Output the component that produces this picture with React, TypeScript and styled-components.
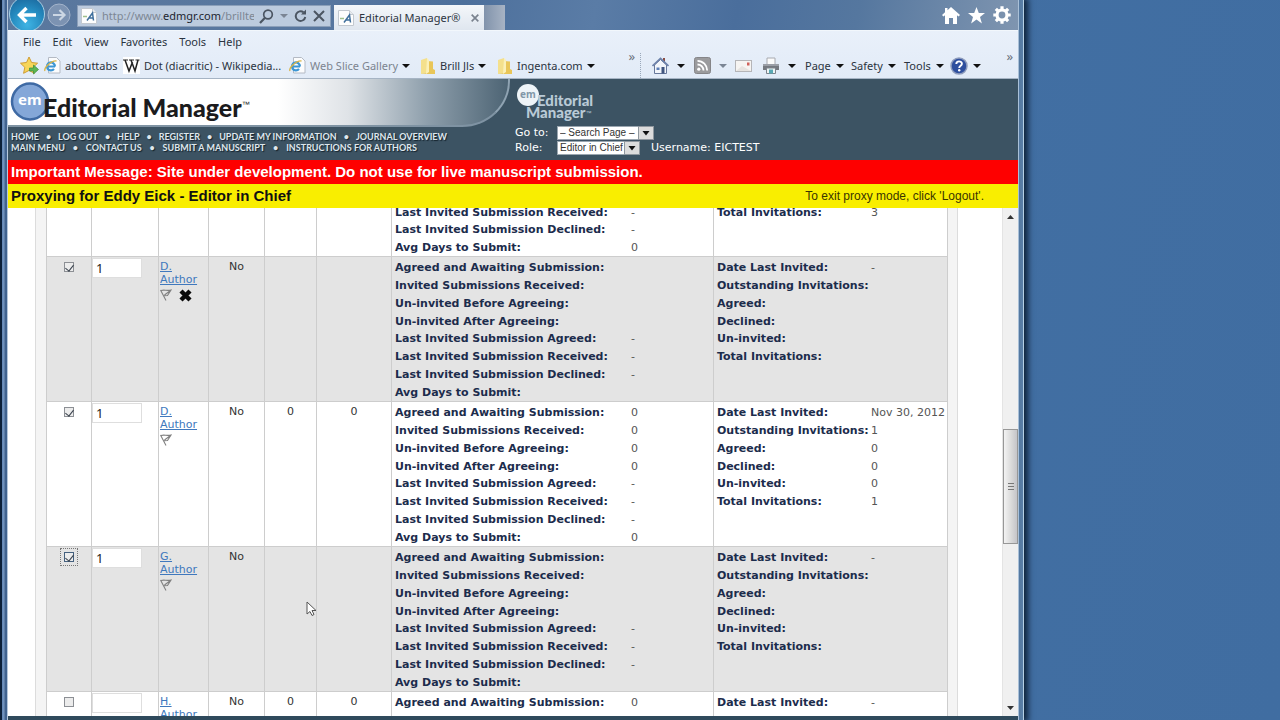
import React, { useLayoutEffect, useRef } from "react";
import styled, { createGlobalStyle, css } from "styled-components";

const ui = `"Noto Sans", "Open Sans", sans-serif`;
const verdana = `"DejaVu Sans", sans-serif`;
const arial = `"Liberation Sans", sans-serif`;
const brandFont = `Lato, sans-serif`;

const GlobalStyle = createGlobalStyle`
  * { box-sizing: border-box; }
  body { margin: 0; background: #426fa3; font-family: ${verdana}; }
  button { border: 0; padding: 0; background: none; color: inherit; font: inherit; }
  a { color: inherit; text-decoration: none; }
  svg { display: block; flex: none; }
`;

/* ---------- window frame ---------- */

const Desktop = styled.div`
  height: 100vh;
  overflow: hidden;
  background: linear-gradient(100deg, #4573a6, #406da1);
`;

const Window = styled.div`
  width: 80%;
  height: 100%;
  padding: 0 6px 4px 8px;
  display: flex;
  flex-direction: column;
  background:
    linear-gradient(90deg, #0c2038 2px, #5f84b4 2px, #7898c0 4px, #41638f 5px, #41638f 7px, #b6c8dc 7px) left / 8px 100% no-repeat,
    linear-gradient(90deg, #a9c0d8 1px, #54789f 1px, #5b80a8 5px, #b6d0e4 5px) right / 6px 100% no-repeat,
    #2f4a5c;
  box-shadow: 2px 0 6px 2px #10243c;
`;

const TitleBar = styled.div`
  height: 30px;
  flex: none;
  display: flex;
  align-items: flex-end;
  background: linear-gradient(100deg, #5a789e 0%, #58779f 30%, #4d709c 45%, #5a7ca6 58%, #4a6e9c 72%, #55779f 84%, #7f95b0 100%);
`;

const HistoryButtons = styled.div`
  height: 30px;
  width: 69px;
  display: flex;
  align-items: center;
`;

const AddressBar = styled.div`
  width: 254px;
  height: 22px;
  margin-bottom: 3px;
  padding: 0 5px 0 3px;
  display: flex;
  align-items: center;
  gap: 5px;
  background: #bccbde;
  border: 1px solid #8b9fb9;
`;

const Url = styled.div`
  flex: 1;
  min-width: 0;
  overflow: hidden;
  white-space: nowrap;
  font: 11px/18px ${ui};
  color: #7d8794;
  b { font-weight: 400; color: #1d2530; }
`;

const AddressTools = styled.div`
  display: flex;
  align-items: center;
  gap: 6px;
`;

const Tab = styled.div`
  width: 150px;
  height: 25px;
  margin-left: 3px;
  padding: 0 5px 0 4px;
  display: flex;
  align-items: center;
  gap: 5px;
  background: linear-gradient(#f4f7fa, #dfe6ef);
  font: 11px/18px ${ui};
  color: #2c3440;
  span { flex: 1; white-space: nowrap; }
`;

const NewTab = styled.button`
  width: 21px;
  height: 25px;
  background: linear-gradient(90deg, #8193ab, #a7b3c4);
`;

const TitleIcons = styled.div`
  margin-left: auto;
  height: 30px;
  padding-right: 7px;
  display: flex;
  align-items: center;
  gap: 8px;
`;

const Bars = styled.div`
  height: 49px;
  flex: none;
  border-top: 1px solid #f2f7fc;
  border-bottom: 1px solid #a6b4c4;
  background: linear-gradient(#e9f0fa, #e2ebf7);
  font: 11px/18px ${ui};
  color: #2a3340;
`;

const MenuBar = styled.nav`
  height: 22px;
  padding-left: 15px;
  display: flex;
  align-items: center;
  gap: 12px;
`;

const ToolsRow = styled.div`
  height: 25px;
  display: flex;
`;

const Favorites = styled.div`
  flex: 1;
  padding-left: 12px;
  display: flex;
  align-items: center;
  white-space: nowrap;
`;

const Favorite = styled.button<{ $muted?: boolean; $w: number }>`
  width: ${(p) => p.$w}px;
  flex: none;
  display: flex;
  align-items: center;
  gap: 4px;
  color: ${(p) => (p.$muted ? "#7c848f" : "inherit")};
`;

const Chevron = styled.span`
  align-self: flex-start;
  margin-left: auto;
  padding-right: 5px;
  font: 13px/6px ${ui};
  color: #69717c;
`;

const Commands = styled.div`
  width: 378px;
  padding-left: 11px;
  display: flex;
  align-items: center;
  border-left: 1px dotted #9aa8ba;
`;

const Command = styled(Favorite)`
  gap: 5px;
`;

const Caret = styled.i<{ $muted?: boolean; $push?: boolean }>`
  flex: none;
  margin-left: ${(p) => (p.$push ? "3px" : "0")};
  border: 4px solid transparent;
  border-top-color: ${(p) => (p.$muted ? "#7b8594" : "#111")};
  border-bottom: 0;
`;

/* ---------- site header ---------- */

const SiteHeader = styled.header`
  height: 81px;
  flex: none;
  display: flex;
  background: #3c5363;
`;

const Brand = styled.div`
  width: 504px;
`;

const BrandPlate = styled.div`
  width: 502px;
  height: 48px;
  padding-left: 1px;
  display: flex;
  border-right: 2px solid #8fa3b2;
  border-bottom: 2px solid #7f93a3;
  border-bottom-right-radius: 48px 46px;
  background: linear-gradient(90deg, #fff 54%, #dfe3e7 68%, #8d9eab 84%, #4d6474 100%);
`;

const BrandName = styled.div`
  margin-left: -6px;
  font: 900 25px/56px ${brandFont};
  color: #1b1b1d;
  white-space: nowrap;
  sup { font: 8px/8px ${arial}; vertical-align: 10px; }
`;

const SiteNav = styled.nav<{ $w: number }>`
  width: ${(p) => p.$w}px;
  margin-left: 3px;
  display: flex;
  justify-content: space-between;
  font: 700 9px/11px ${brandFont};
  color: #dfe7ed;
  text-shadow: 1px 1px 1px #14222c;
  white-space: nowrap;
  &:first-of-type { margin-top: 4px; }
`;

const HeaderSide = styled.div`
  padding: 5px 0 0 3px;
`;

const SmallLogo = styled.div`
  display: flex;
  height: 41px;
  margin-left: 1px;
  font: 900 15px/12px ${brandFont};
  color: #b9cad6;
  div { padding-top: 10px; margin-left: -14px; }
  span { display: block; }
  span:first-child { padding-left: 11px; }
  sup { font: 6px/6px ${arial}; vertical-align: 3px; }
`;

const Field = styled.div`
  height: 15px;
  display: flex;
  align-items: center;
  font: 11px/15px ${verdana};
  color: #fff;
  label { width: 42px; }
  strong { margin-left: 11px; font-weight: 400; }
`;

const SelectBox = styled.span<{ $w: number }>`
  width: ${(p) => p.$w}px;
  height: 14px;
  position: relative;
  select {
    display: block;
    width: 100%;
    height: 14px;
    padding: 0 2px;
    appearance: none;
    border: 1px solid #9aa6b0;
    border-radius: 0;
    background: #fff;
    font: 10px/12px ${arial};
    color: #333;
  }
  svg {
    position: absolute;
    right: 0;
    top: 0;
    pointer-events: none;
  }
`;

const Warning = styled.div`
  height: 24px;
  flex: none;
  padding-left: 3px;
  background: #fe0000;
  font: 700 15px/24px ${arial};
  color: #fff;
`;

const Proxy = styled.div`
  height: 24px;
  flex: none;
  padding: 0 34px 0 3px;
  display: flex;
  justify-content: space-between;
  background: #f9ee00;
  font: 700 15px/23px ${arial};
  color: #111;
  span { font: 12px/24px ${arial}; color: #3a3500; }
`;

/* ---------- scrolling page ---------- */

const Viewport = styled.div`
  flex: 1;
  min-height: 0;
  display: flex;
  position: relative;
  background: #fff;
`;

const Scroller = styled.main`
  flex: 1;
  min-width: 0;
  overflow: hidden;
  padding: 0 44px 0 27px;
`;

const Panel = styled.div`
  padding: 0 9px 0 10px;
  border: solid #dcdcdc;
  border-width: 0 1px;
  background: #f4f4f4;
`;

const Grid = styled.table`
  width: 100%;
  table-layout: fixed;
  border-collapse: collapse;
  font: 11px/13px ${verdana};
  color: #333;
`;

const Row = styled.tr<{ $shaded?: boolean }>`
  background: ${(p) => (p.$shaded ? "#e4e4e4" : "#fff")};
`;

const Cell = styled.td<{ $center?: boolean }>`
  padding: 3px 1px 0;
  vertical-align: top;
  border: 1px solid #cdcdcd;
  text-align: ${(p) => (p.$center ? "center" : "left")};
`;

const InputCell = styled(Cell)`
  padding: 1px 0 0;
`;

const StatCell = styled(Cell)`
  padding: 0 0 0 3px;
`;

const Stats = styled.dl<{ $col: number; $rows: number }>`
  margin: 0;
  padding-top: 2px;
  height: ${(p) => p.$rows * 18}px;
  display: grid;
  grid-template-columns: ${(p) => p.$col}px 1fr;
  grid-template-rows: repeat(${(p) => p.$rows}, 1fr);
  align-items: center;
  white-space: nowrap;
  dt { font-weight: 700; color: #1c2c4c; }
  dd { margin: 0; color: #555; }
`;

const Check = styled.input<{ $focused?: boolean }>`
  appearance: none;
  width: 10px;
  height: 10px;
  margin: 2px 1px 0 0;
  border: 1px solid #8c8f94;
  background: #ececec;
  vertical-align: top;
  ${(p) =>
    p.$focused &&
    css`
      outline: 1px dotted #777;
      outline-offset: 3px;
      border-color: #45617f;
    `}
  &:checked::after {
    content: "";
    display: block;
    width: 4px;
    height: 7px;
    margin-left: 2px;
    border: solid #38404c;
    border-width: 0 1px 1px 0;
    transform: rotate(38deg);
  }
`;

const Priority = styled.input`
  display: block;
  width: 50px;
  height: 20px;
  padding: 0 3px;
  border: 1px solid #dedede;
  background: #fff;
  font: 13px/18px ${ui};
  color: #222;
`;

const AuthorLink = styled.a`
  display: block;
  width: 40px;
  color: #4078bd;
  text-decoration: underline;
`;

const Marks = styled.div`
  display: flex;
  gap: 7px;
  margin-top: 3px;
`;

const ScrollBar = styled.div`
  width: 16px;
  display: flex;
  flex-direction: column;
  background: #f0f0f0;
  border-left: 1px solid #e4e4e4;
`;

const ArrowButton = styled.button`
  height: 17px;
  display: grid;
  place-items: center;
`;

const Track = styled.div<{ $grow: number }>`
  flex: ${(p) => p.$grow} 0 0;
`;

const Thumb = styled.div`
  flex: 113 0 0;
  display: grid;
  place-items: center;
  border: 1px solid #979797;
  background: linear-gradient(90deg, #f3f3f3, #dcdcdc 50%, #c4c4c8);
`;

const Pointer = styled.svg`
  position: absolute;
  left: 298px;
  top: 393px;
`;

/* ---------- drawings ---------- */

const BackIcon = () => (
  <svg width="38" height="30" viewBox="0 0 38 30">
    <defs>
      <radialGradient id="back" cx=".5" cy=".8" r=".8">
        <stop offset="0" stopColor="#3fb4e4" />
        <stop offset=".6" stopColor="#2488bd" />
        <stop offset="1" stopColor="#1c6a9f" />
      </radialGradient>
    </defs>
    <circle cx="19" cy="14" r="17.5" fill="url(#back)" stroke="#a8cfe4" />
    <path d="M28 15H12M18.500 8L11.500 15l7 7" fill="none" stroke="#fff" strokeWidth="3.400" />
  </svg>
);

const ForwardIcon = () => (
  <svg width="26" height="30" viewBox="0 0 26 30">
    <circle cx="13" cy="15" r="11" fill="#7c93b2" stroke="#a3b4cb" />
    <path d="M7 15h11M13.500 10l5 5-5 5" fill="none" stroke="#ccd7e4" strokeWidth="2.200" />
  </svg>
);

const PageIcon = () => (
  <svg width="16" height="16" viewBox="0 0 16 16">
    <path d="M.5.500h11l4 4v11H.5z" fill="#fdfdfd" stroke="#c2c8cf" />
    <path d="M11.500.500v4h4" fill="#e8ebef" stroke="#c2c8cf" />
    <path d="M2 8.500h4" stroke="#9fc08c" strokeWidth="1.500" />
    <path d="M6 12.500L11.500 5l1 7.500M8 10h4" fill="none" stroke="#3f6f9c" strokeWidth="1.500" />
  </svg>
);

const IeIcon = () => (
  <svg width="17" height="17" viewBox="0 0 17 17">
    <path d="M4.500.500h8l3.500 3.500v12h-11.500z" fill="#fbfcfd" stroke="#b4bac4" />
    <path d="M11 9.500H3.200M11 9.500a4 4 0 1 0-1 2.600" fill="none" stroke="#3c96d4" strokeWidth="2.200" />
    <path d="M1 14C-.5 11 7 3.500 12.500 4" fill="none" stroke="#d9b548" strokeWidth="1.300" />
  </svg>
);

const FolderIcon = () => (
  <svg width="16" height="18" viewBox="0 0 16 18">
    <path d="M1 3l6-2v15l-6 1z" fill="#f4e08c" />
    <path d="M7 4l6 .500V12l2 1v4H1l6-1z" fill="#e9c659" />
    <path d="M7 1l2 2v12l-3 2z" fill="#fbf0b8" />
  </svg>
);

const StarAddIcon = () => (
  <svg width="20" height="19" viewBox="0 0 20 19">
    <path d="M9 1l2.600 5.500 6 .700-4.400 4.100 1.200 6L9 14.400l-5.400 2.900 1.200-6L.5 7.200l6-.700z" fill="#f7d659" stroke="#cf9c34" />
    <path d="M9.500 12h4V9l5 4.500-5 4.500v-3h-4z" fill="#5db652" stroke="#3b8c3a" strokeWidth=".7" />
  </svg>
);

const WikiIcon = () => (
  <svg width="17" height="17" viewBox="0 0 17 17">
    <rect width="17" height="17" fill="#fff" />
    <path d="M0 3h5M6 3h5M12.500 3h4" stroke="#222" />
    <path d="M2 3l4 11L9.500 5M8 3l4 11 3-11" fill="none" stroke="#222" strokeWidth="1.500" />
  </svg>
);

const HouseIcon = () => (
  <svg width="17" height="18" viewBox="0 0 17 18">
    <path d="M11 1h2v4h-2z" fill="#8a4c44" />
    <path d="M2.500 8v8.500h12V8L8.500 2.500z" fill="#f2f5fa" stroke="#66779a" />
    <path d="M.5 9L8.500 1.500 16.500 9" fill="none" stroke="#6d82aa" strokeWidth="1.700" />
    <path d="M4.500 10.500h3V13h-3z" fill="#5d7fb8" />
    <path d="M9.500 10h3v6.500h-3z" fill="#40557f" />
  </svg>
);

const RssIcon = () => (
  <svg width="17" height="17" viewBox="0 0 17 17">
    <rect x=".5" y=".5" width="16" height="16" rx="2" fill="#9b9b9d" stroke="#858588" />
    <circle cx="4.800" cy="12.200" r="1.600" fill="#fff" />
    <path d="M3.500 7.500a6 6 0 0 1 6 6M3.500 3.800a9.700 9.700 0 0 1 9.700 9.700" fill="none" stroke="#fff" strokeWidth="1.800" />
  </svg>
);

const MailIcon = () => (
  <svg width="17" height="12" viewBox="0 0 17 12">
    <rect x=".5" y=".5" width="16" height="11" fill="#f6f4f2" stroke="#b5b5b8" />
    <path d="M1 11l6-5 9 5" fill="#e6e3e0" />
    <rect x="12" y="2.500" width="2.500" height="3" fill="#d0615a" />
  </svg>
);

const PrinterIcon = () => (
  <svg width="18" height="18" viewBox="0 0 18 18">
    <path d="M5 1h8v7H5z" fill="#fbfbfb" stroke="#a8aab0" />
    <path d="M1 7h16v6H1z" fill="#74787f" />
    <path d="M1 7h16v2H1z" fill="#9a9ea6" />
    <path d="M4.500 11h9v5.500h-9z" fill="#eef4f4" stroke="#7d838c" />
    <path d="M7 12.500h4v4H7z" fill="#58a8b4" />
  </svg>
);

const HelpIcon = () => (
  <svg width="18" height="18" viewBox="0 0 18 18">
    <circle cx="9" cy="9" r="8" fill="#2e4f9e" stroke="#8e9cbc" strokeWidth="1.500" />
    <path d="M6.300 7c0-3.600 5.600-3.400 5.600-.3 0 2-2.700 2-2.700 4.300" fill="none" stroke="#fff" strokeWidth="1.900" />
    <circle cx="9.200" cy="13.300" r="1.200" fill="#fff" />
  </svg>
);

const SearchIcon = () => (
  <svg width="15" height="15" viewBox="0 0 15 15">
    <circle cx="9" cy="5.500" r="4.300" fill="none" stroke="#4b5562" strokeWidth="1.700" />
    <path d="M6 8.800L1 14" stroke="#4b5562" strokeWidth="2.200" />
  </svg>
);

const ReloadIcon = () => (
  <svg width="13" height="14" viewBox="0 0 13 14">
    <path d="M9.500 3.300A4.800 4.800 0 1 0 11.300 8" fill="none" stroke="#4b5562" strokeWidth="1.900" />
    <path d="M7 5.500h5V.5z" fill="#4b5562" />
  </svg>
);

const CrossIcon = ({ size, color, weight }: { size: number; color: string; weight: number }) => (
  <svg width={size} height={size} viewBox="0 0 12 12">
    <path d="M1 1l10 10M11 1L1 11" stroke={color} strokeWidth={weight} />
  </svg>
);

const WhiteHome = () => (
  <svg width="18" height="17" viewBox="0 0 18 17">
    <path d="M9 0l9 8-1.500 1.500L15 8.300V17h-4v-6H7v6H3V8.300L1.500 9.500 0 8l3-2.700V1h2.500v2.200z" fill="#fff" />
  </svg>
);

const WhiteStar = () => (
  <svg width="17" height="17" viewBox="0 0 17 17">
    <path d="M8.500 0l2.300 6H17l-5 4 1.900 6.500-5.400-4-5.400 4L5 10 0 6h6.200z" fill="#fff" />
  </svg>
);

const WhiteGear = () => (
  <svg width="18" height="18" viewBox="0 0 18 18">
    <circle cx="9" cy="9" r="5" fill="none" stroke="#fff" strokeWidth="3.200" />
    {[0, 45, 90, 135].map((a) => (
      <path key={a} d="M9 .3v3M9 14.700v3" stroke="#fff" strokeWidth="3.200" transform={`rotate(${a} 9 9)`} />
    ))}
  </svg>
);

const EmBadge = () => (
  <svg width="40" height="42" viewBox="0 0 40 42">
    <circle cx="21" cy="22.500" r="18" fill="#84a7d8" stroke="#3f6aa4" strokeWidth="2.500" />
    <text x="9" y="26" fontFamily="Noto Sans, sans-serif" fontWeight="700" fontSize="15" fill="#fff">em</text>
  </svg>
);

const EmBadgeSmall = () => (
  <svg width="24" height="24" viewBox="0 0 24 24">
    <circle cx="12" cy="11" r="11" fill="#eef4f8" />
    <text x="4" y="14" fontFamily="Noto Sans, sans-serif" fontWeight="700" fontSize="10" fill="#8298a8">em</text>
  </svg>
);

const DropArrow = () => (
  <svg width="16" height="14" viewBox="0 0 16 14">
    <rect x=".5" y=".5" width="15" height="13" fill="#dcdcdc" stroke="#8f979e" />
    <path d="M4.500 5h7L8 9.500z" fill="#111" />
  </svg>
);

const FlagIcon = () => (
  <svg width="12" height="12" viewBox="0 0 12 12">
    <path d="M.5 1l5.500 10.500M1 1.500c3-1 6 .500 10-.500L7.500 6.500 4 6.800M10.500 1.500L4.500 6" fill="none" stroke="#808080" strokeWidth="1.100" />
  </svg>
);

const BlockIcon = () => (
  <svg width="13" height="13" viewBox="0 0 13 13">
    <path d="M2 2l9 9M11 2l-9 9" stroke="#0a0a0a" strokeWidth="4.400" />
  </svg>
);

const Triangle = ({ down }: { down?: boolean }) => (
  <svg width="7" height="4" viewBox="0 0 7 4">
    <path d={down ? "M0 0h7L3.500 4z" : "M0 4h7L3.500 0z"} fill="#333" />
  </svg>
);

/* ---------- data ---------- */

const statLabels = [
  "Agreed and Awaiting Submission:",
  "Invited Submissions Received:",
  "Un-invited Before Agreeing:",
  "Un-invited After Agreeing:",
  "Last Invited Submission Agreed:",
  "Last Invited Submission Received:",
  "Last Invited Submission Declined:",
  "Avg Days to Submit:",
];

const inviteLabels = [
  "Date Last Invited:",
  "Outstanding Invitations:",
  "Agreed:",
  "Declined:",
  "Un-invited:",
  "Total Invitations:",
];

type Author = {
  id: string;
  name?: string;
  checked?: boolean;
  focused?: boolean;
  blocked?: boolean;
  priority?: string;
  counts: [string, string];
  stats: string[];
  invites: string[];
  range: [number, number];
};

const none = ["", "", "", "", "-", "-", "-", ""];

const authors: Author[] = [
  { id: "a0", counts: ["", ""], stats: ["0", "0", "0", "0", "-", "-", "-", "0"], invites: ["", "", "", "", "", "3"], range: [5, 8] },
  { id: "a1", name: "D. Author", checked: true, blocked: true, priority: "1", counts: ["", ""], stats: none, invites: ["-"], range: [0, 8] },
  { id: "a2", name: "D. Author", checked: true, priority: "1", counts: ["0", "0"], stats: ["0", "0", "0", "0", "-", "-", "-", "0"], invites: ["Nov 30, 2012", "1", "0", "0", "0", "1"], range: [0, 8] },
  { id: "a3", name: "G. Author", checked: true, focused: true, priority: "1", counts: ["", ""], stats: none, invites: ["-"], range: [0, 8] },
  { id: "a4", name: "H. Author", priority: "", counts: ["0", "0"], stats: ["0", "0"], invites: ["-", ""], range: [0, 2] },
];

const StatList = ({ labels, values, range, col }: { labels: string[]; values: string[]; range: [number, number]; col: number }) => (
  <Stats $col={col} $rows={8 - range[0]}>
    {labels.slice(range[0], range[1]).map((label, i) => (
      <React.Fragment key={label}>
        <dt>{label}</dt>
        <dd>{values[range[0] + i]}</dd>
      </React.Fragment>
    ))}
  </Stats>
);

const AuthorRow = ({ author, shaded }: { author: Author; shaded: boolean }) => (
  <Row $shaded={shaded}>
    <Cell $center>
      {author.name && (
        <Check type="checkbox" aria-label={`Select ${author.name}`} defaultChecked={author.checked} $focused={author.focused} />
      )}
    </Cell>
    <InputCell>
      {author.name && <Priority type="text" aria-label={`Order for ${author.name}`} defaultValue={author.priority} />}
    </InputCell>
    <Cell>
      {author.name && (
        <>
          <AuthorLink href="#author">{author.name}</AuthorLink>
          <Marks>
            <FlagIcon />
            {author.blocked && <BlockIcon />}
          </Marks>
        </>
      )}
    </Cell>
    <Cell $center>{author.name && "No"}</Cell>
    <Cell $center>{author.counts[0]}</Cell>
    <Cell $center>{author.counts[1]}</Cell>
    <StatCell>
      <StatList labels={statLabels} values={author.stats} range={author.range} col={236} />
    </StatCell>
    <StatCell>
      <StatList labels={inviteLabels} values={author.invites} range={author.range} col={154} />
    </StatCell>
  </Row>
);

const navRows = [
  { w: 436, items: ["HOME", "LOG OUT", "HELP", "REGISTER", "UPDATE MY INFORMATION", "JOURNAL OVERVIEW"] },
  { w: 406, items: ["MAIN MENU", "CONTACT US", "SUBMIT A MANUSCRIPT", "INSTRUCTIONS FOR AUTHORS"] },
];

export default function App() {
  const scroller = useRef<HTMLElement>(null);

  useLayoutEffect(() => {
    if (scroller.current) scroller.current.scrollTop = 7;
  }, []);

  return (
    <Desktop>
      <GlobalStyle />
      <Window>
        <TitleBar>
          <HistoryButtons>
            <button aria-label="Back"><BackIcon /></button>
            <button aria-label="Forward"><ForwardIcon /></button>
          </HistoryButtons>
          <AddressBar>
            <PageIcon />
            <Url>http://www.<b>edmgr.com</b>/brillte</Url>
            <AddressTools>
              <SearchIcon />
              <Caret $muted />
              <ReloadIcon />
              <CrossIcon size={12} color="#4b5562" weight={2} />
            </AddressTools>
          </AddressBar>
          <Tab>
            <PageIcon />
            <span>Editorial Manager®</span>
            <CrossIcon size={8} color="#7a828e" weight={2.5} />
          </Tab>
          <NewTab aria-label="New tab" />
          <TitleIcons>
            <button aria-label="Home"><WhiteHome /></button>
            <button aria-label="Favorites"><WhiteStar /></button>
            <button aria-label="Settings"><WhiteGear /></button>
          </TitleIcons>
        </TitleBar>

        <Bars>
          <MenuBar>
            {["File", "Edit", "View", "Favorites", "Tools", "Help"].map((m) => (
              <button key={m}>{m}</button>
            ))}
          </MenuBar>
          <ToolsRow>
            <Favorites>
              <Favorite $w={24} aria-label="Add to favorites"><StarAddIcon /></Favorite>
              <Favorite $w={79}><IeIcon />abouttabs</Favorite>
              <Favorite $w={166}><WikiIcon />Dot (diacritic) - Wikipedia...</Favorite>
              <Favorite $w={131} $muted><IeIcon />Web Slice Gallery<Caret /></Favorite>
              <Favorite $w={77}><FolderIcon />Brill Jls<Caret /></Favorite>
              <Favorite $w={96}><FolderIcon />Ingenta.com<Caret /></Favorite>
              <Chevron>»</Chevron>
            </Favorites>
            <Commands>
              <Command $w={42} aria-label="Home page"><HouseIcon /><Caret $push /></Command>
              <Command $w={41} aria-label="Feeds"><RssIcon /><Caret $muted $push /></Command>
              <Command $w={27} aria-label="Read mail"><MailIcon /></Command>
              <Command $w={43} aria-label="Print"><PrinterIcon /><Caret $push /></Command>
              <Command $w={46}>Page<Caret /></Command>
              <Command $w={53}>Safety<Caret /></Command>
              <Command $w={46}>Tools<Caret /></Command>
              <Command $w={30} aria-label="Help"><HelpIcon /><Caret /></Command>
              <Chevron>»</Chevron>
            </Commands>
          </ToolsRow>
        </Bars>

        <SiteHeader>
          <Brand>
            <BrandPlate>
              <EmBadge />
              <BrandName>Editorial Manager<sup>™</sup></BrandName>
            </BrandPlate>
            {navRows.map((row) => (
              <SiteNav key={row.w} $w={row.w}>
                {row.items.map((item, i) => (
                  <React.Fragment key={item}>
                    {i > 0 && <span>•</span>}
                    <a href="#nav">{item}</a>
                  </React.Fragment>
                ))}
              </SiteNav>
            ))}
          </Brand>
          <HeaderSide>
            <SmallLogo>
              <EmBadgeSmall />
              <div>
                <span>Editorial</span>
                <span>Manager<sup>™</sup></span>
              </div>
            </SmallLogo>
            <Field>
              <label htmlFor="goto">Go to:</label>
              <SelectBox $w={97}>
                <select id="goto"><option>– Search Page –</option></select>
                <DropArrow />
              </SelectBox>
            </Field>
            <Field>
              <label htmlFor="role">Role:</label>
              <SelectBox $w={83}>
                <select id="role"><option>Editor in Chief</option></select>
                <DropArrow />
              </SelectBox>
              <strong>Username: EICTEST</strong>
            </Field>
          </HeaderSide>
        </SiteHeader>

        <Warning>Important Message: Site under development. Do not use for live manuscript submission.</Warning>
        <Proxy>
          Proxying for Eddy Eick - Editor in Chief
          <span>To exit proxy mode, click 'Logout'.</span>
        </Proxy>

        <Viewport>
          <Scroller ref={scroller}>
            <Panel>
              <Grid>
                <colgroup>
                  {[45, 67, 50, 56, 52, 75, 322].map((w) => <col key={w} width={w} />)}
                  <col />
                </colgroup>
                <tbody>
                  {authors.map((a, i) => <AuthorRow key={a.id} author={a} shaded={i % 2 === 1} />)}
                </tbody>
              </Grid>
            </Panel>
          </Scroller>
          <ScrollBar>
            <ArrowButton aria-label="Scroll up"><Triangle /></ArrowButton>
            <Track $grow={205} />
            <Thumb>
              <svg width="6" height="7" viewBox="0 0 6 7">
                <path d="M0 .5h6M0 3.500h6M0 6.500h6" stroke="#777" />
              </svg>
            </Thumb>
            <Track $grow={156} />
            <ArrowButton aria-label="Scroll down"><Triangle down /></ArrowButton>
          </ScrollBar>
          <Pointer width="11" height="16" viewBox="0 0 11 16">
            <path d="M1 1v12l3-2.500 2 4 2-1-2-4h4z" fill="#fff" stroke="#555" />
          </Pointer>
        </Viewport>
      </Window>
    </Desktop>
  );
}
